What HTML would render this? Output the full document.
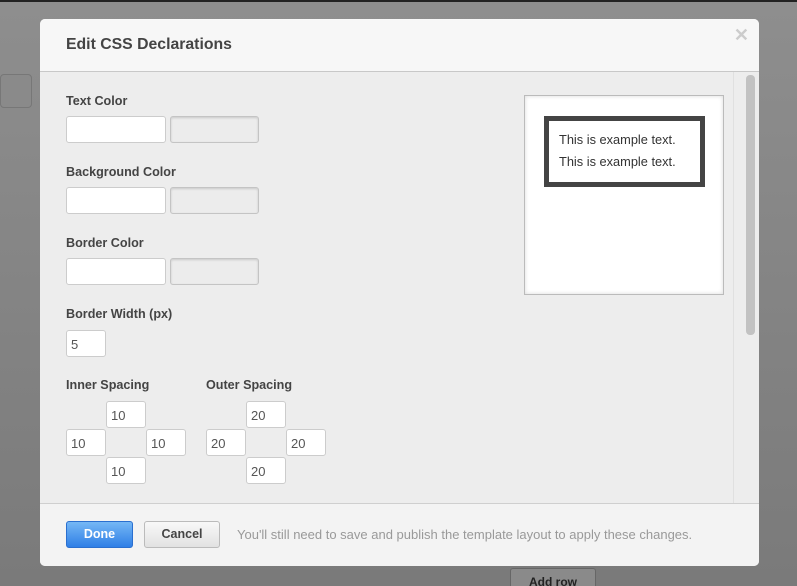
<!DOCTYPE html>
<html style="overflow:hidden"><head><style>
html,body{margin:0;width:797px;height:586px;overflow:hidden}
body{background:linear-gradient(#8e8e8e,#7a7a7a);font-family:"Liberation Sans",Arial,sans-serif;position:relative}
.a{position:absolute}
.m{left:40px;top:19px;width:719px;height:547px;background:#ededed;border-radius:5px;overflow:hidden}
.hd{left:0;top:0;width:719px;height:52px;background:#f7f7f7;border-bottom:1px solid #c8c8c8}
.hd h1{position:absolute;left:26px;top:17px;margin:0;font-size:15.8px;color:#444;font-weight:bold}
.ft{left:0;top:484px;width:719px;height:63px;background:#f3f3f3;border-top:1px solid #cfcfcf}
.lb{font-size:12.6px;font-weight:bold;color:#444}
.in{background:#fff;border:1px solid #ccc;border-radius:3px;box-sizing:border-box;height:27px;font-size:13px;color:#555;padding:6px 0 0 4px}
.gr{background:#ececec;border:1px solid #c4c4c4;border-radius:3px;box-sizing:border-box;height:27px;width:89px;box-shadow:inset 0 1px 2px rgba(0,0,0,.15)}
.sq{width:40px}
</style></head><body>
<div class="a" style="left:0;top:0;width:797px;height:2px;background:#222"></div>
<div class="a" style="left:0;top:74px;width:30px;height:32px;border:1px solid #777;border-radius:4px;background:#8a8a8a"></div>
<div class="a" style="left:510px;top:568px;width:84px;height:18px;border:1px solid #666;border-bottom:none;border-radius:3px 3px 0 0;background:#8a8a8a;font-size:12px;font-weight:bold;color:#222;text-align:center;line-height:26px;overflow:hidden">Add row</div>
<div class="a m">
<div class="a hd"><h1>Edit CSS Declarations</h1><div class="a" style="right:10px;top:6px;font-size:18px;color:#ccc;font-weight:bold">✕</div></div>
<div class="a lb" style="left:26px;top:75px">Text Color</div>
<div class="a in" style="left:26px;top:97px;width:100px"></div><div class="a gr" style="left:130px;top:97px"></div>
<div class="a lb" style="left:26px;top:146px">Background Color</div>
<div class="a in" style="left:26px;top:168px;width:100px"></div><div class="a gr" style="left:130px;top:168px"></div>
<div class="a lb" style="left:26px;top:217px">Border Color</div>
<div class="a in" style="left:26px;top:239px;width:100px"></div><div class="a gr" style="left:130px;top:239px"></div>
<div class="a lb" style="left:26px;top:288px">Border Width (px)</div>
<div class="a in sq" style="left:26px;top:311px">5</div>
<div class="a lb" style="left:26px;top:359px">Inner Spacing</div>
<div class="a in sq" style="left:66px;top:382px">10</div>
<div class="a in sq" style="left:26px;top:410px">10</div>
<div class="a in sq" style="left:106px;top:410px">10</div>
<div class="a in sq" style="left:66px;top:438px">10</div>
<div class="a lb" style="left:166px;top:359px">Outer Spacing</div>
<div class="a in sq" style="left:206px;top:382px">20</div>
<div class="a in sq" style="left:166px;top:410px">20</div>
<div class="a in sq" style="left:246px;top:410px">20</div>
<div class="a in sq" style="left:206px;top:438px">20</div>
<div class="a" style="left:484px;top:76px;width:198px;height:198px;background:#fff;border:1px solid #bbb;box-shadow:inset 0 0 4px rgba(0,0,0,.15)"></div>
<div class="a" style="left:504px;top:97px;width:151px;height:61px;border:5px solid #444;background:#fff;font-size:12.8px;color:#333;line-height:22px;padding:0"><div style="padding:8px 0 0 10px">This is example text.<br>This is example text.</div></div>
<div class="a" style="left:693px;top:53px;width:26px;height:431px;border-left:1px solid #e0e0e0"></div>
<div class="a" style="left:706px;top:56px;width:9px;height:260px;background:#c2c2c2;border-radius:4px"></div>
<div class="a ft">
<div class="a" style="left:26px;top:17px;width:67px;height:27px;border-radius:3px;background:linear-gradient(#75b7f5,#2f7fe6);border:1px solid #2a6fcf;box-sizing:border-box;color:#fff;font-size:12.5px;font-weight:bold;text-align:center;line-height:25px">Done</div>
<div class="a" style="left:104px;top:17px;width:76px;height:27px;border-radius:3px;background:linear-gradient(#f8f8f8,#e2e2e2);border:1px solid #bbb;box-sizing:border-box;color:#444;font-size:12.5px;font-weight:bold;text-align:center;line-height:25px">Cancel</div>
<div class="a" style="left:197px;top:23px;font-size:13px;color:#999">You'll still need to save and publish the template layout to apply these changes.</div>
</div>
</div>
</body></html>
